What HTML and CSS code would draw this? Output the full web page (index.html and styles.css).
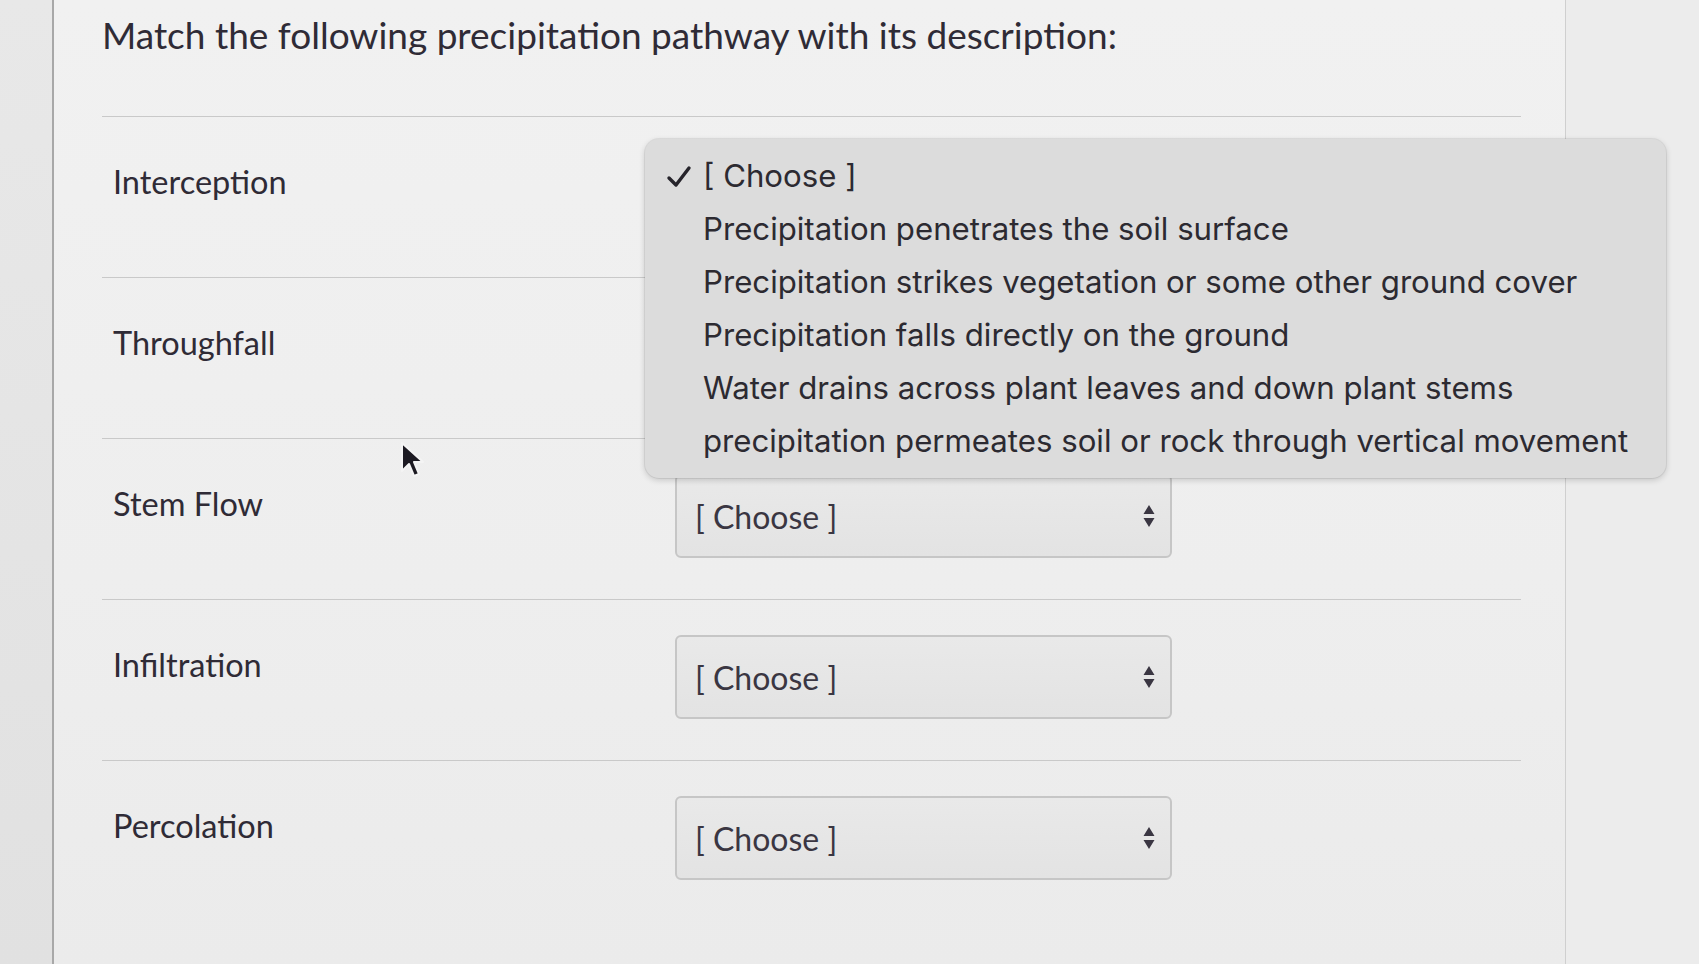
FILE: index.html
```html
<!DOCTYPE html>
<html>
<head>
<meta charset="utf-8">
<link rel="stylesheet" href="styles.css">
</head>
<body>
<div class="page">
  <div class="gutter"></div>
  <div class="panel">
    <h1 class="title">Match the following precipitation pathway with its description:</h1>
    <div class="rows">
      <div class="row"><div class="label">Interception</div><div class="slot"></div></div>
      <div class="row"><div class="label">Throughfall</div><div class="slot"></div></div>
      <div class="row"><div class="label">Stem Flow</div><div class="slot"><div class="select"><span>[ Choose ]</span><span class="arrows"><svg width="14" height="28" viewBox="0 0 14 28"><path d="M7 3 L12.5 12 H1.5 Z M7 25 L12.5 16 H1.5 Z" fill="#3a3642"/></svg></span></div></div></div>
      <div class="row"><div class="label">Infiltration</div><div class="slot"><div class="select"><span>[ Choose ]</span><span class="arrows"><svg width="14" height="28" viewBox="0 0 14 28"><path d="M7 3 L12.5 12 H1.5 Z M7 25 L12.5 16 H1.5 Z" fill="#3a3642"/></svg></span></div></div></div>
      <div class="row"><div class="label">Percolation</div><div class="slot"><div class="select"><span>[ Choose ]</span><span class="arrows"><svg width="14" height="28" viewBox="0 0 14 28"><path d="M7 3 L12.5 12 H1.5 Z M7 25 L12.5 16 H1.5 Z" fill="#3a3642"/></svg></span></div></div></div>
    </div>
  </div>
  <div class="side"></div>
  <ul class="menu">
    <li class="checked"><svg class="check" width="26" height="24" viewBox="0 0 26 24"><path d="M3 13 L10 20 L23 3" fill="none" stroke="#26242b" stroke-width="3.4" stroke-linecap="round" stroke-linejoin="round"/></svg>[ Choose ]</li>
    <li>Precipitation penetrates the soil surface</li>
    <li>Precipitation strikes vegetation or some other ground cover</li>
    <li>Precipitation falls directly on the ground</li>
    <li>Water drains across plant leaves and down plant stems</li>
    <li>precipitation permeates soil or rock through vertical movement</li>
  </ul>
  <svg class="cursor" width="26" height="40" viewBox="0 0 26 40"><path d="M2 2 L2 30 L9 23 L14 35 L19 33 L14 21 L23 21 Z" fill="#1c1a22" stroke="#f4f4f4" stroke-width="2" stroke-linejoin="round"/></svg>
</div>
</body>
</html>
```
FILE: styles.css
```css
html, body {
  margin: 0;
  padding: 0;
}
body {
  background: #e6e6e6;
  font-family: Lato, "Liberation Sans", sans-serif;
  color: #2f2b36;
  overflow: hidden;
}
.page {
  position: relative;
  display: flex;
  width: 1699px;
  height: 964px;
}
.gutter {
  width: 52px;
  flex: none;
  background: linear-gradient(180deg, #e8e8e8, #e1e1e1);
}
.panel {
  width: 1514px;
  flex: none;
  background: linear-gradient(180deg, #f1f1f1 0%, #eeeeee 60%, #ebebeb 100%);
  border-left: 2px solid #a8a8a8;
  border-right: 1px solid #cfcfcf;
  box-sizing: border-box;
  padding: 0 0 0 48px;
}
.side {
  flex: 1;
  background: #ececec;
}
.title {
  margin: 0;
  padding-top: 11px;
  height: 116px;
  box-sizing: border-box;
  font-size: 37px;
  line-height: 48px;
  font-weight: 400;
  color: #2f2b36;
}
.rows {
  width: 1419px;
}
.row {
  display: flex;
  height: 161px;
  box-sizing: border-box;
  border-top: 1.5px solid #c9c9c9;
}
.label {
  width: 573px;
  padding-left: 11px;
  padding-top: 46px;
  font-size: 32.5px;
  line-height: 38px;
  box-sizing: border-box;
}
.slot {
  padding-top: 35px;
}
.select {
  width: 497px;
  height: 84px;
  box-sizing: border-box;
  border: 2px solid #c6c6c6;
  border-radius: 6px;
  background: linear-gradient(180deg, #e9e9e9, #e3e3e3);
  display: flex;
  align-items: center;
  justify-content: space-between;
  padding: 0 14px 0 18px;
  font-size: 32px;
  color: #3a3642;
}
.arrows {
  display: flex;
  align-items: center;
}
.menu {
  position: absolute;
  left: 645px;
  top: 139px;
  width: 1021px;
  height: 339px;
  box-sizing: border-box;
  margin: 0;
  padding: 11px 0 0 58px;
  list-style: none;
  background: #dcdcdc;
  border-radius: 14px;
  box-shadow: 0 2px 6px rgba(0,0,0,0.18), 0 0 0 1px rgba(0,0,0,0.06);
  font-family: Inter, "Open Sans", sans-serif;
  font-size: 31.2px;
  color: #2c2a31;
}
.menu li {
  position: relative;
  height: 53px;
  line-height: 53px;
  white-space: nowrap;
}
.check {
  position: absolute;
  left: -37px;
  top: 15px;
}
.cursor {
  position: absolute;
  left: 400px;
  top: 441px;
}
```
